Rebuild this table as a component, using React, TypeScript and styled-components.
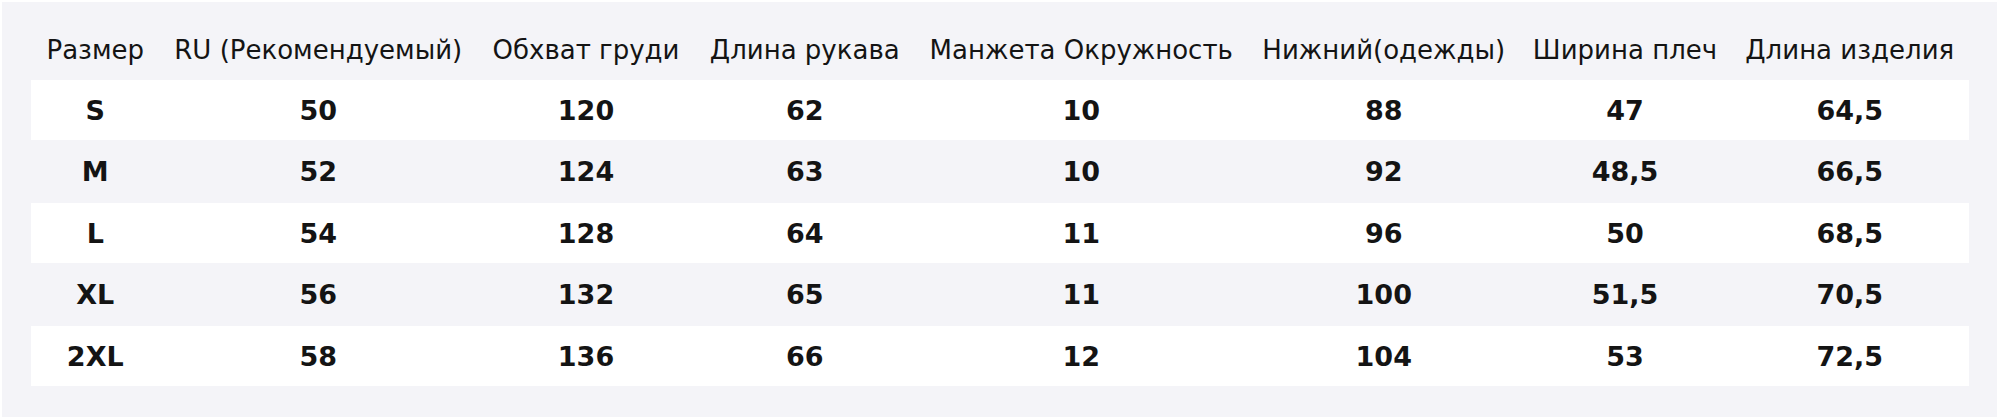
import React from 'react';
import styled, { createGlobalStyle } from 'styled-components';

const GlobalStyle = createGlobalStyle`
  html, body {
    margin: 0;
    padding: 0;
    background: #ffffff;
  }
  body {
    font-family: "DejaVu Sans", "Noto Sans", sans-serif;
    color: #141414;
  }
`;

// column widths measured from the reference
const COLUMNS = [128.5, 317.5, 218, 219.5, 333.5, 271.5, 211, 238.5];

const HEADERS = [
  'Размер',
  'RU (Рекомендуемый)',
  'Обхват груди',
  'Длина рукава',
  'Манжета Окружность',
  'Нижний(одежды)',
  'Ширина плеч',
  'Длина изделия',
];

const ROWS: Array<Array<string>> = [
  ['S', '50', '120', '62', '10', '88', '47', '64,5'],
  ['M', '52', '124', '63', '10', '92', '48,5', '66,5'],
  ['L', '54', '128', '64', '11', '96', '50', '68,5'],
  ['XL', '56', '132', '65', '11', '100', '51,5', '70,5'],
  ['2XL', '58', '136', '66', '12', '104', '53', '72,5'],
];

const Page = styled.div`
  padding: 2px 3px 2px 2px;
`;

const Panel = styled.div`
  background: #f4f4f8;
  padding: 29px 28px 31px 29px;
`;

const Grid = styled.div`
  display: grid;
  grid-template-columns: ${COLUMNS.map((w) => `${w}px`).join(' ')};
`;

const HeaderRow = styled.div`
  display: contents;
`;

const HeaderCell = styled.div`
  height: 49px;
  display: flex;
  align-items: center;
  justify-content: center;
  font-size: 26px;
  white-space: nowrap;
  padding-bottom: 12px;
  box-sizing: border-box;
`;

const BodyCell = styled.div<{ $striped: boolean }>`
  height: ${(p) => (p.$striped ? 63 : 60)}px;
  background: ${(p) => (p.$striped ? 'transparent' : '#ffffff')};
  display: flex;
  align-items: center;
  justify-content: center;
  font-size: 27px;
  font-weight: 700;
  white-space: nowrap;
`;

const App: React.FC = () => {
  return (
    <Page>
      <GlobalStyle />
      <Panel>
        <Grid>
          <HeaderRow>
            {HEADERS.map((h) => (
              <HeaderCell key={h}>{h}</HeaderCell>
            ))}
          </HeaderRow>
          {ROWS.map((row, i) =>
            row.map((value, j) => (
              <BodyCell key={`${i}-${j}`} $striped={i % 2 === 1}>
                {value}
              </BodyCell>
            ))
          )}
        </Grid>
      </Panel>
    </Page>
  );
};

export default App;
